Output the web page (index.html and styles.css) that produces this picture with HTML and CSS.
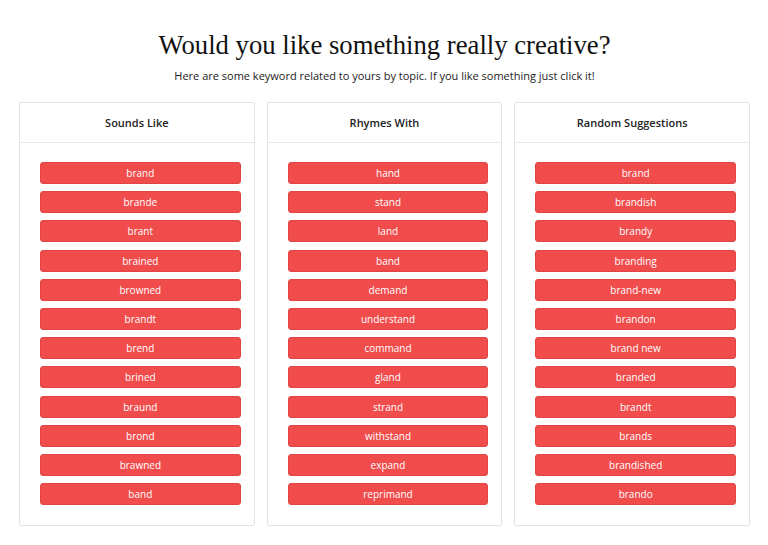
FILE: index.html
```html
<!DOCTYPE html>
<html>
<head>
<meta charset="utf-8">
<link rel="stylesheet" href="styles.css">
</head>
<body>
<div class="page">
  <h1 class="title">Would you like something really creative?</h1>
  <p class="subtitle">Here are some keyword related to yours by topic. If you like something just click it!</p>
  <div class="cards">
    <div class="card">
      <div class="card-head">Sounds Like</div>
      <div class="card-body">
        <button class="word">brand</button>
        <button class="word">brande</button>
        <button class="word">brant</button>
        <button class="word">brained</button>
        <button class="word">browned</button>
        <button class="word">brandt</button>
        <button class="word">brend</button>
        <button class="word">brined</button>
        <button class="word">braund</button>
        <button class="word">brond</button>
        <button class="word">brawned</button>
        <button class="word">band</button>
      </div>
    </div>
    <div class="card">
      <div class="card-head">Rhymes With</div>
      <div class="card-body">
        <button class="word">hand</button>
        <button class="word">stand</button>
        <button class="word">land</button>
        <button class="word">band</button>
        <button class="word">demand</button>
        <button class="word">understand</button>
        <button class="word">command</button>
        <button class="word">gland</button>
        <button class="word">strand</button>
        <button class="word">withstand</button>
        <button class="word">expand</button>
        <button class="word">reprimand</button>
      </div>
    </div>
    <div class="card">
      <div class="card-head">Random Suggestions</div>
      <div class="card-body">
        <button class="word">brand</button>
        <button class="word">brandish</button>
        <button class="word">brandy</button>
        <button class="word">branding</button>
        <button class="word">brand-new</button>
        <button class="word">brandon</button>
        <button class="word">brand new</button>
        <button class="word">branded</button>
        <button class="word">brandt</button>
        <button class="word">brands</button>
        <button class="word">brandished</button>
        <button class="word">brando</button>
      </div>
    </div>
  </div>
</div>
</body>
</html>
```
FILE: styles.css
```css
html, body {
  margin: 0;
  padding: 0;
  background: #ffffff;
}
body {
  font-family: "Open Sans", "Noto Sans", sans-serif;
  color: #212529;
}
.page {
  padding: 28px 18px 0 19px;
}
.title {
  font-family: "Liberation Serif", "DejaVu Serif", serif;
  font-weight: normal;
  font-size: 26.7px;
  line-height: 34px;
  margin: 0;
  text-align: center;
  color: #111;
}
.subtitle {
  margin: 5px 0 0 0;
  font-size: 11px;
  line-height: 18px;
  text-align: center;
  color: #222;
}
.cards {
  margin-top: 17px;
  display: grid;
  grid-template-columns: repeat(3, 1fr);
  gap: 12px;
}
.card {
  border: 1px solid #e3e3e3;
  border-radius: 2px;
  background: #fff;
}
.card-head {
  height: 39px;
  line-height: 39px;
  text-align: center;
  font-size: 11px;
  font-weight: 600;
  color: #222;
  border-bottom: 1px solid #e8e8e8;
}
.card-body {
  padding: 19px 13px 20px 20px;
  display: flex;
  flex-direction: column;
  gap: 7.2px;
}
.word {
  display: block;
  width: 100%;
  height: 22px;
  margin: 0;
  padding: 0;
  border: 1px solid #e24444;
  border-radius: 3px;
  background: #f04c4c;
  color: #fff;
  font-family: "Open Sans", "Noto Sans", sans-serif;
  font-size: 10px;
  line-height: 20px;
  text-align: center;
}
```
